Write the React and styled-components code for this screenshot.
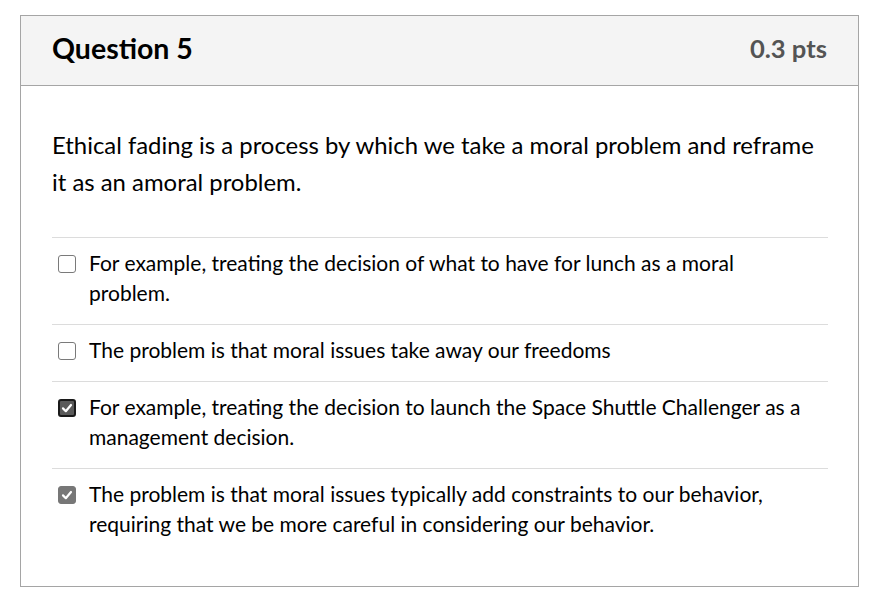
import React from 'react';
import styled, { createGlobalStyle } from 'styled-components';

const GlobalStyle = createGlobalStyle`
  html, body {
    margin: 0;
    padding: 0;
    background: #ffffff;
  }
  body {
    font-family: Lato, "Liberation Sans", sans-serif;
    font-weight: 400;
  }
`;

const Page = styled.div`
  padding: 15px 16px 12px 20px;
`;

const Card = styled.div`
  width: 837px;
  border: 1px solid #a5a5a5;
  background: #fff;
`;

const Header = styled.div`
  display: flex;
  justify-content: space-between;
  align-items: center;
  height: 70px;
  padding: 0 31px 6px 31px;
  box-sizing: border-box;
  background: #f4f4f4;
  border-bottom: 1px solid #a5a5a5;
`;

const Title = styled.h2`
  margin: 0;
  font-size: 28.5px;
  font-weight: 700;
  color: #000;
`;

const Points = styled.span`
  font-size: 25.6px;
  font-weight: 700;
  color: #545454;
`;

const Body = styled.div`
  padding: 40px 30px 31px 31px;
`;

const Prompt = styled.p`
  margin: 0 0 37px;
  font-size: 23.9px;
  line-height: 37px;
  font-weight: 400;
  color: #000;
`;

const Answers = styled.ul`
  list-style: none;
  margin: 0;
  padding: 0;
`;

const Answer = styled.li`
  display: flex;
  align-items: flex-start;
  gap: 13px;
  padding: 10px 20px 16px 6px;
  border-top: 1px solid #dcdcdc;
  font-size: 21px;
  line-height: 30px;
  font-weight: 400;
  color: #000;
`;

const Box = styled.span`
  flex: none;
  width: 18px;
  height: 18px;
  margin-top: 7px;
  box-sizing: border-box;
  border-radius: 3px;
  display: flex;
  align-items: center;
  justify-content: center;
  border: ${(p) =>
    p.$focused ? '2px solid #1a1a1a' : p.$checked ? '1px solid #777' : '1px solid #7a7a7a'};
  background: ${(p) => (p.$focused ? '#5a5a5a' : p.$checked ? '#777' : '#fff')};
`;

const Check = () => (
  <svg width="12" height="12" viewBox="0 0 12 12">
    <path d="M2 6.4 L4.8 9.2 L10 3" fill="none" stroke="#fff" strokeWidth="2.2" strokeLinecap="round" strokeLinejoin="round" />
  </svg>
);

const answers = [
  { text: 'For example, treating the decision of what to have for lunch as a moral problem.' },
  { text: 'The problem is that moral issues take away our freedoms' },
  {
    text: 'For example, treating the decision to launch the Space Shuttle Challenger as a management decision.',
    checked: true,
    focused: true,
  },
  {
    text: 'The problem is that moral issues typically add constraints to our behavior, requiring that we be more careful in considering our behavior.',
    checked: true,
  },
];

export default function App() {
  return (
    <>
      <GlobalStyle />
      <Page>
        <Card>
          <Header>
            <Title>Question 5</Title>
            <Points>0.3 pts</Points>
          </Header>
          <Body>
            <Prompt>
              Ethical fading is a process by which we take a moral problem and reframe it as an amoral problem.
            </Prompt>
            <Answers>
              {answers.map((a, i) => (
                <Answer key={i}>
                  <Box $checked={a.checked} $focused={a.focused}>
                    {a.checked && <Check />}
                  </Box>
                  <span>{a.text}</span>
                </Answer>
              ))}
            </Answers>
          </Body>
        </Card>
      </Page>
    </>
  );
}
